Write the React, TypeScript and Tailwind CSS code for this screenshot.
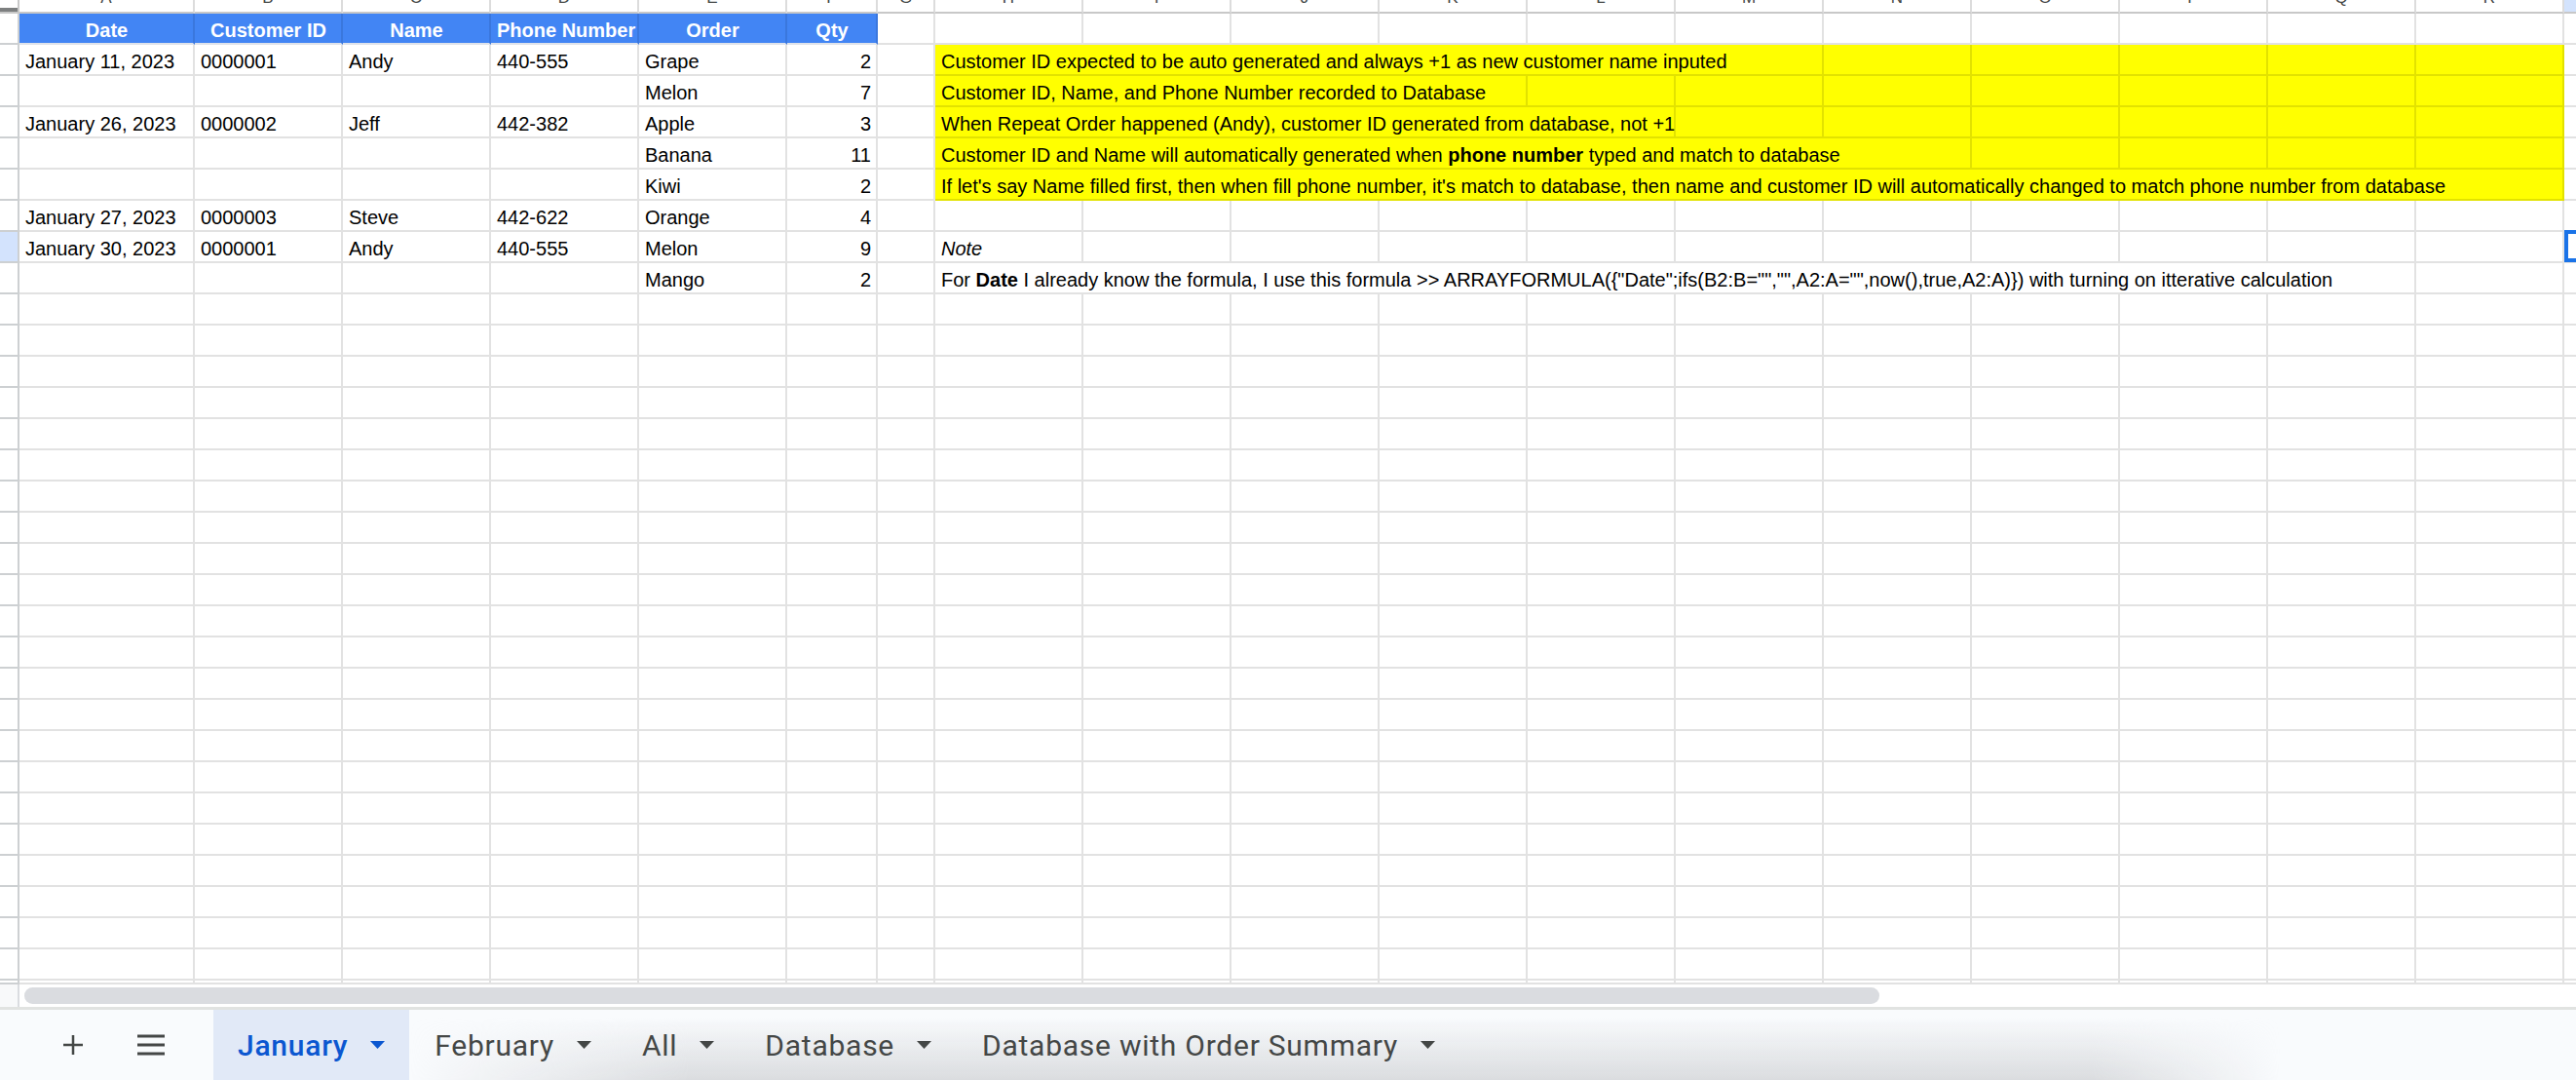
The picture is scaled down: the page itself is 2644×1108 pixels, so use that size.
import React from "react";

// column widths A..R (S is the cut-off column at the right edge)
const W = [180, 152, 152, 152, 152, 93, 59, 152, 152, 152, 152, 152, 152, 152, 152, 152, 152, 152];
const LETTERS = ["A", "B", "C", "D", "E", "F", "G", "H", "I", "J", "K", "L", "M", "N", "O", "P", "Q", "R"];

type Kind = "plain" | "head" | "yellow";
type Cell = { text?: React.ReactNode; span?: number; right?: boolean; kind?: Kind; italic?: boolean };

const kindClass: Record<Kind, string> = {
  plain: "bg-white border-[#e2e2e2] text-black",
  head: "bg-[#4285f4] border-r-[#3a77dd] border-b-[#dfe3ea] text-white font-bold text-center",
  yellow: "bg-[#ffff00] border-[#e2e200] text-black",
};

const Y = (n: number): Cell[] => Array.from({ length: n }, () => ({ kind: "yellow" as Kind }));

const pad = (cells: Cell[]): Cell[] => {
  const out = [...cells];
  let used = out.reduce((a, c) => a + (c.span ?? 1), 0);
  while (used < W.length) {
    out.push({});
    used++;
  }
  return out;
};

const person = (date: string, id: string, name: string, phone: string): Cell[] => [
  { text: date },
  { text: id },
  { text: name },
  { text: phone },
];
const blank4: Cell[] = [{}, {}, {}, {}];

const header: Cell[] = pad(
  ["Date", "Customer ID", "Name", "Phone Number", "Order", "Qty"].map((t) => ({ kind: "head" as Kind, text: t }))
);

const rows: { cells: Cell[]; selected?: boolean }[] = [
  {
    cells: [
      ...person("January 11, 2023", "0000001", "Andy", "440-555"),
      { text: "Grape" },
      { text: "2", right: true },
      {},
      { kind: "yellow", span: 6, text: "Customer ID expected to be auto generated and always +1 as new customer name inputed" },
      ...Y(5),
    ],
  },
  {
    cells: [
      ...blank4,
      { text: "Melon" },
      { text: "7", right: true },
      {},
      { kind: "yellow", span: 4, text: "Customer ID, Name, and Phone Number recorded to Database" },
      ...Y(7),
    ],
  },
  {
    cells: [
      ...person("January 26, 2023", "0000002", "Jeff", "442-382"),
      { text: "Apple" },
      { text: "3", right: true },
      {},
      { kind: "yellow", span: 5, text: "When Repeat Order happened (Andy), customer ID generated from database, not +1" },
      ...Y(6),
    ],
  },
  {
    cells: [
      ...blank4,
      { text: "Banana" },
      { text: "11", right: true },
      {},
      {
        kind: "yellow",
        span: 7,
        text: (
          <>
            Customer ID and Name will automatically generated when <b>phone number</b> typed and match to database
          </>
        ),
      },
      ...Y(4),
    ],
  },
  {
    cells: [
      ...blank4,
      { text: "Kiwi" },
      { text: "2", right: true },
      {},
      {
        kind: "yellow",
        span: 11,
        text: "If let's say Name filled first, then when fill phone number, it's match to database, then name and customer ID will automatically changed to match phone number from database",
      },
    ],
  },
  {
    cells: pad([...person("January 27, 2023", "0000003", "Steve", "442-622"), { text: "Orange" }, { text: "4", right: true }]),
  },
  {
    selected: true,
    cells: pad([
      ...person("January 30, 2023", "0000001", "Andy", "440-555"),
      { text: "Melon" },
      { text: "9", right: true },
      {},
      { text: "Note", italic: true },
    ]),
  },
  {
    cells: pad([
      ...blank4,
      { text: "Mango" },
      { text: "2", right: true },
      {},
      {
        span: 10,
        text: (
          <>
            For <b>Date</b> I already know the formula, I use this formula &gt;&gt; ARRAYFORMULA({"{"}"Date";ifs(B2:B="","",A2:A="",now(),true,A2:A){"}"}) with turning on itterative calculation
          </>
        ),
      },
    ]),
  },
];

while (rows.length < 30) rows.push({ cells: pad([]) });

function GridRow({ cells, selected, thin }: { cells: Cell[]; selected?: boolean; thin?: boolean }) {
  let col = 0;
  return (
    <div className={`flex shrink-0 ${thin ? "h-[4px]" : "h-[32px]"}`}>
      <div
        className={`w-[20px] shrink-0 border-r-2 border-b-2 border-[#cdd0d2] ${selected ? "bg-[#d3e3fd]" : "bg-white"}`}
      />
      {cells.map((c, i) => {
        const span = c.span ?? 1;
        const width = W.slice(col, col + span).reduce((a, b) => a + b, 0);
        col += span;
        return (
          <div
            key={i}
            style={{ width }}
            className={`shrink-0 border-r-2 border-b-2 whitespace-nowrap overflow-visible ${kindClass[c.kind ?? "plain"]} ${
              thin ? "" : "pl-[6px] pr-[5px] pt-[4px] leading-[26px] text-[20px]"
            } ${c.right ? "text-right" : ""} ${c.italic ? "italic" : ""}`}
          >
            {c.text}
          </div>
        );
      })}
      <div className="relative flex-1 border-b-2 border-[#e2e2e2] bg-white">
        {selected && (
          <div className="absolute -top-[2px] -bottom-[1px] left-0 -right-[20px] border-[4px] border-[#1a73e8]" />
        )}
      </div>
    </div>
  );
}

function Caret() {
  return (
    <svg width="15" height="8" viewBox="0 0 15 8" className="shrink-0">
      <polygon points="0,0 15,0 7.5,8" fill="currentColor" />
    </svg>
  );
}

function Tab({ name }: { name: string }) {
  return (
    <div className="flex items-center gap-[23px] px-[26px] text-[#444746]">
      <span>{name}</span>
      <Caret />
    </div>
  );
}

export default function App() {
  return (
    <div className="w-[2644px] h-[1108px] overflow-hidden bg-white flex flex-col font-['Liberation_Sans',Arial,sans-serif]">
      {/* column letters, scrolled almost out of view */}
      <div className="flex h-[14px] shrink-0">
        <div className="w-[20px] shrink-0 border-r-2 border-b-2 border-[#c8c8c8] pt-[8px]">
          <div className="h-[4px] bg-[#7d7f80]" />
        </div>
        {LETTERS.map((l, i) => (
          <div
            key={l}
            style={{ width: W[i] }}
            className="shrink-0 overflow-hidden flex justify-center border-r-2 border-r-[#dcdcdc] border-b-2 border-b-[#c8c8c8]"
          >
            <span className="text-[17px] leading-[17px] -mt-[11px] text-[#444746]">{l}</span>
          </div>
        ))}
        <div className="flex-1 bg-[#d3e3fd] border-b-2 border-[#c8c8c8]" />
      </div>

      <GridRow cells={header} />
      {rows.map((r, i) => (
        <GridRow key={i} cells={r.cells} selected={r.selected} />
      ))}
      <GridRow cells={pad([])} thin />

      {/* horizontal scrollbar */}
      <div className="flex h-[23px] shrink-0">
        <div className="w-[20px] shrink-0 bg-[#f8f9fa] border-r-2 border-[#dadce0]" />
        <div className="flex-1 pl-[5px] pt-[3px]">
          <div className="w-[1904px] h-[17px] rounded-full bg-[#dadce0]" />
        </div>
      </div>

      {/* sheet tabs */}
      <div className="flex h-[75px] shrink-0 border-t-[3px] border-[#e1e3e1] bg-[#f9fbfd] font-['Roboto',sans-serif] text-[30px] tracking-[0.75px]">
        <div className="flex items-center pl-[65px]">
          <svg width="20" height="20" viewBox="0 0 20 20">
            <path d="M10 0v20M0 10h20" stroke="#444746" strokeWidth="2.5" />
          </svg>
          <svg width="28" height="22" viewBox="0 0 28 22" className="ml-[56px]">
            <path d="M0 2h28M0 11h28M0 20h28" stroke="#444746" strokeWidth="3" />
          </svg>
        </div>
        <div className="ml-[50px] flex items-center gap-[23px] px-[25px] bg-[#e1e9f7] text-[#0b57d0] font-medium">
          <span>January</span>
          <Caret />
        </div>
        <div className="relative flex w-[1920px]">
          <div className="pointer-events-none absolute inset-0 bg-[linear-gradient(to_bottom,rgba(218,220,223,0)_10%,#dadcdf_100%)] [mask-image:linear-gradient(to_right,transparent,#000_15%,#000_90%,transparent)]" />
          <div className="relative flex">
            <Tab name="February" />
            <Tab name="All" />
            <Tab name="Database" />
            <Tab name="Database with Order Summary" />
          </div>
        </div>
      </div>
    </div>
  );
}
